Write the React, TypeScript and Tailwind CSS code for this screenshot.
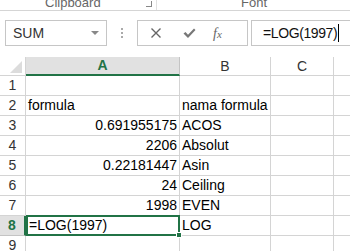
import { useState } from "react";

interface TRow {
  n: number
  a: string
  b: string
  alignA: "left" | "right"
}

const rows: TRow[] = [
  { n: 1, a: "", b: "", alignA: "left" },
  { n: 2, a: "formula", b: "nama formula", alignA: "left" },
  { n: 3, a: "0.691955175", b: "ACOS", alignA: "right" },
  { n: 4, a: "2206", b: "Absolut", alignA: "right" },
  { n: 5, a: "0.22181447", b: "Asin", alignA: "right" },
  { n: 6, a: "24", b: "Ceiling", alignA: "right" },
  { n: 7, a: "1998", b: "EVEN", alignA: "right" },
  { n: 8, a: "=LOG(1997)", b: "LOG", alignA: "left" },
  { n: 9, a: "", b: "", alignA: "left" },
];

export default function App() {
  const [selected] = useState(8);

  return (
    <div className="w-[350px] h-[251px] overflow-hidden bg-white text-[#222] font-['Liberation_Sans',Arial,sans-serif]">
      {/* ribbon bottom */}
      <div className="h-[11px] border-b border-[#d5d5d5] flex overflow-hidden">
        <div className="w-[157px] relative border-r border-[#e1e1e1]">
          <span className="absolute left-[45px] -top-[7px] text-[13px] text-[#666]">Clipboard</span>
          <span className="absolute left-[146px] top-[1px] w-[6px] h-[6px] border-r border-b border-[#888]"></span>
        </div>
        <div className="flex-1 relative">
          <span className="absolute left-[84px] -top-[7px] text-[13px] text-[#666]">Font</span>
        </div>
      </div>

      {/* formula bar */}
      <div className="flex items-center h-[26px] mt-[9px]">
        <div className="ml-[5px] w-[102px] h-[26px] border border-[#c6c6c6] flex items-center justify-between pl-[7px] pr-[7px]">
          <span className="text-[14px] text-[#333]">SUM</span>
          <span className="w-0 h-0 border-l-[4px] border-r-[4px] border-t-[4px] border-l-transparent border-r-transparent border-t-[#888]"></span>
        </div>
        <div className="w-[30px] flex flex-col items-center gap-[2px]">
          <span className="w-[2px] h-[2px] bg-[#aaa]"></span>
          <span className="w-[2px] h-[2px] bg-[#aaa]"></span>
          <span className="w-[2px] h-[2px] bg-[#aaa]"></span>
        </div>
        <div className="w-[111px] h-[26px] border border-[#c6c6c6] flex items-center">
          <svg width="12" height="12" viewBox="0 0 12 12" className="ml-[12px]">
            <path d="M1.5 1.5 L10.5 10.5 M10.5 1.5 L1.5 10.5" stroke="#666" strokeWidth="1.4" fill="none" />
          </svg>
          <svg width="13" height="11" viewBox="0 0 13 11" className="ml-[21px]">
            <path d="M0.5 5.5 L2.5 4 L5 6.8 L11 0.5 L12.5 2 L5 10 Z" fill="#777" />
          </svg>
          <span className="ml-[17px] text-[14px] italic text-[#666] font-['Liberation_Serif',serif]">f<span className="text-[11px]">x</span></span>
        </div>
        <div className="ml-[3px] flex-1 h-[26px] border border-[#c6c6c6] border-r-0 flex items-center pl-[11px]">
          <span className="text-[14px] tracking-[-0.4px] text-[#111]">=LOG(1997)</span>
          <span className="w-[1px] h-[18px] bg-black ml-[1px]"></span>
        </div>
      </div>

      {/* column headers */}
      <div className="flex h-[19px] mt-[11px] text-[14px]">
        <div className="w-[26px] border-r border-b border-[#d4d4d4] flex items-end justify-end pr-[3px] pb-[2px]">
          <svg width="12" height="12" viewBox="0 0 12 12">
            <path d="M12 0 L12 12 L0 12 Z" fill="#dcdcdc" />
          </svg>
        </div>
        <div className="w-[154px] bg-[#e1e1e1] border-r border-[#c4c4c4] border-b-2 border-b-[#217346] flex items-center justify-center font-bold text-[#217346]">A</div>
        <div className="w-[91px] border-r border-b border-[#d4d4d4] flex items-center justify-center text-[#333]">B</div>
        <div className="w-[63px] border-r border-b border-[#d4d4d4] flex items-center justify-center text-[#333]">C</div>
        <div className="flex-1 border-b border-[#d4d4d4]"></div>
      </div>

      {/* grid */}
      {rows.map((row) => {
        const isSel = row.n === selected;
        return (
          <div key={row.n} className="flex h-[20px] text-[14px]">
            <div
              className={
                isSel
                  ? "w-[26px] bg-[#e1e1e1] border-r-2 border-r-[#217346] border-b border-b-[#c4c4c4] flex items-center justify-center font-bold text-[#217346]"
                  : "w-[26px] border-r border-b border-[#d4d4d4] flex items-center justify-center text-[#333]"
              }
            >
              {row.n}
            </div>
            <div
              className={
                isSel
                  ? "w-[154px] relative -mt-[1px] h-[21px] border-2 border-[#217346] flex items-center pl-[1px] text-black"
                  : "w-[154px] border-r border-b border-[#d4d4d4] flex items-center px-[2px] text-black " +
                    (row.alignA === "right" ? "justify-end" : "justify-start")
              }
            >
              {row.a}
              {isSel && (
                <span className="absolute -right-[4px] -bottom-[4px] w-[6px] h-[6px] bg-[#217346] border border-white"></span>
              )}
            </div>
            <div className="w-[91px] border-r border-b border-[#d4d4d4] flex items-center px-[2px] text-black">{row.b}</div>
            <div className="w-[63px] border-r border-b border-[#d4d4d4]"></div>
            <div className="flex-1 border-b border-[#d4d4d4]"></div>
          </div>
        );
      })}
    </div>
  );
}
